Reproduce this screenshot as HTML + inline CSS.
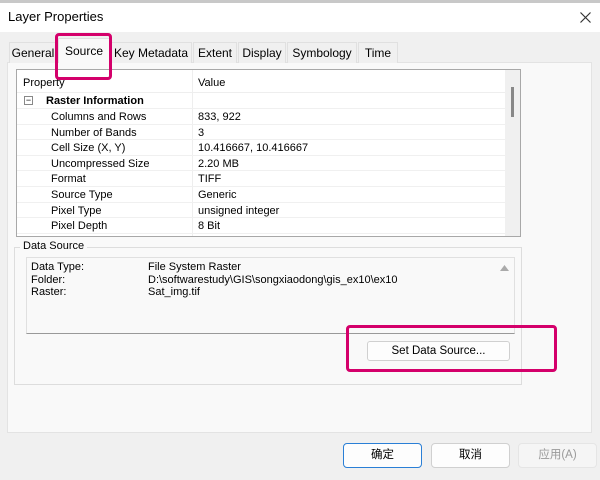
<!DOCTYPE html>
<html><head><meta charset="utf-8"><style>
*{margin:0;padding:0;box-sizing:border-box}
body{width:600px;height:480px;overflow:hidden;background:#f0f0f0;font-family:"Liberation Sans","Noto Sans CJK SC",sans-serif;font-size:11px;color:#000;position:relative}
.a{position:absolute}
.title{left:0;top:3px;width:600px;height:29px;background:#fff}
.tab{top:42px;height:21px;border:1px solid #e0e0e0;border-bottom:none;background:#f0f0f0;font-size:12px;padding:3px 0 0 0;text-align:center}
.panel{left:7px;top:62px;width:585px;height:371px;background:#f9f9f9;border:1px solid #e3e3e3}
.grid{left:16px;top:69px;width:505px;height:168px;background:#fff;border:1px solid #a8a8a8}
.row{position:absolute;left:0;width:488px;height:15.6px;border-bottom:1px solid #f0f0f0}
.row span{position:absolute;top:2px}
.btn{background:#fdfdfd;border:1px solid #d0d0d0;border-radius:3px;text-align:center;font-size:11.5px}
.pink{border:3px solid #d4006b;border-radius:4px}
</style></head><body>
<div class="a" style="left:0;top:0;width:600px;height:3px;background:#c8c8c8"></div>
<div class="a title"><span class="a" style="left:8px;top:6px;font-size:13px">Layer Properties</span>
<svg class="a" style="left:580px;top:9px" width="11" height="11"><path d="M0.5 0.5L10.5 10.5M10.5 0.5L0.5 10.5" stroke="#333" stroke-width="1.2"/></svg></div>
<div class="a panel"></div>
<div class="a tab" style="left:9px;width:48px">General</div>
<div class="a tab" style="left:58px;top:38px;height:25px;width:52px;background:#f9f9f9;padding-top:5px">Source</div>
<div class="a tab" style="left:110px;width:82px">Key Metadata</div>
<div class="a tab" style="left:193px;width:44px">Extent</div>
<div class="a tab" style="left:238px;width:48px">Display</div>
<div class="a tab" style="left:287px;width:70px">Symbology</div>
<div class="a tab" style="left:358px;width:40px">Time</div>

<div class="a grid">
 <div class="row" style="top:0;height:23px;border-bottom:1px solid #eee"><span style="left:6px;top:7px">Property</span><span style="left:181px;top:7px">Value</span></div>
 <div class="a" style="left:175px;top:0;width:1px;height:166px;background:#eee"></div>
 <div class="row" style="top:23px"><span style="left:7px;top:3px;width:9px;height:9px;border:1px solid #888;font-size:9px;line-height:6px;text-align:center">−</span><span style="left:29px;font-weight:bold">Raster Information</span></div>
 <div class="row" style="top:39px"><span style="left:34px">Columns and Rows</span><span style="left:181px">833, 922</span></div>
 <div class="row" style="top:54.6px"><span style="left:34px">Number of Bands</span><span style="left:181px">3</span></div>
 <div class="row" style="top:70.2px"><span style="left:34px">Cell Size (X, Y)</span><span style="left:181px">10.416667, 10.416667</span></div>
 <div class="row" style="top:85.8px"><span style="left:34px">Uncompressed Size</span><span style="left:181px">2.20 MB</span></div>
 <div class="row" style="top:101.4px"><span style="left:34px">Format</span><span style="left:181px">TIFF</span></div>
 <div class="row" style="top:117px"><span style="left:34px">Source Type</span><span style="left:181px">Generic</span></div>
 <div class="row" style="top:132.6px"><span style="left:34px">Pixel Type</span><span style="left:181px">unsigned integer</span></div>
 <div class="row" style="top:148.2px"><span style="left:34px">Pixel Depth</span><span style="left:181px">8 Bit</span></div>
 <div class="a" style="left:488px;top:0;width:15px;height:166px;background:#f0f0f0"></div>
 <div class="a" style="left:494px;top:17px;width:3px;height:30px;background:#888"></div>
</div>

<div class="a" style="left:14px;top:247px;width:508px;height:138px;border:1px solid #ddd"></div>
<div class="a" style="left:20px;top:240px;background:#f9f9f9;padding:0 3px">Data Source</div>
<div class="a" style="left:26px;top:257px;width:489px;height:77px;border:1px solid #e0e0e0;border-bottom:1px solid #999;background:#f9f9f9">
 <span class="a" style="left:4px;top:3px;line-height:12.5px">Data Type:<br>Folder:<br>Raster:</span>
 <span class="a" style="left:121px;top:3px;line-height:12.5px">File System Raster<br>D:\softwarestudy\GIS\songxiaodong\gis_ex10\ex10<br>Sat_img.tif</span>
 <svg class="a" style="left:473px;top:7px" width="9" height="6"><path d="M0 6L4.5 0L9 6Z" fill="#aaa"/></svg>
</div>
<div class="a btn" style="left:367px;top:341px;width:143px;height:20px;line-height:18px">Set Data Source...</div>

<div class="a btn" style="left:343px;top:443px;width:79px;height:25px;line-height:23px;border-color:#2a7fd6;border-radius:4px">确定</div>
<div class="a btn" style="left:431px;top:443px;width:79px;height:25px;line-height:23px;border-radius:4px">取消</div>
<div class="a btn" style="left:518px;top:443px;width:79px;height:25px;line-height:23px;color:#999;background:#f5f5f5;border-color:#e5e5e5;border-radius:4px">应用(A)</div>

<div class="a pink" style="left:55px;top:33px;width:57px;height:47px"></div>
<div class="a pink" style="left:346px;top:325px;width:211px;height:47px"></div>
</body></html>
